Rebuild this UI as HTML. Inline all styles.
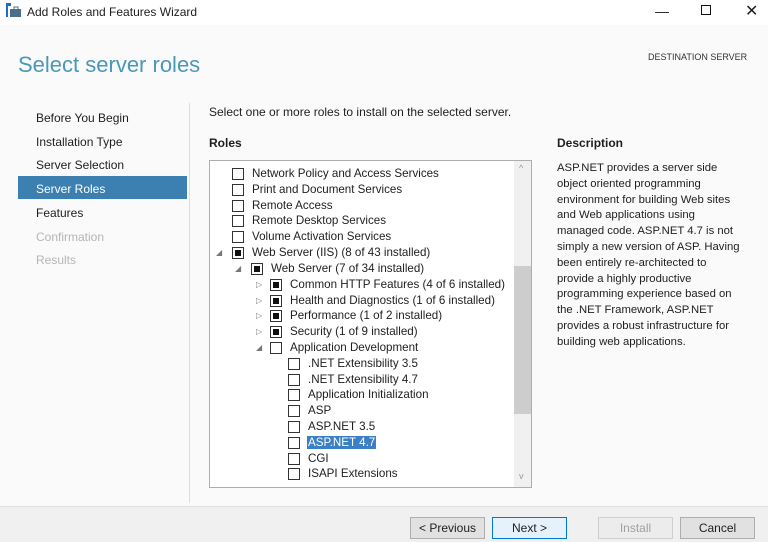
<!DOCTYPE html>
<html><head><style>
*{margin:0;padding:0;box-sizing:border-box}
body{width:768px;height:542px;position:relative;background:#fafafa;font-family:"Liberation Sans",sans-serif;font-size:12px;color:#1e1e1e;overflow:hidden}
.a{position:absolute;white-space:nowrap}
.tb{position:absolute;left:0;top:0;width:768px;height:25px;background:#fff}
.nav{position:absolute;left:36px;font-size:12px;color:#1e1e1e}
.row{position:absolute;height:16px;line-height:16px;white-space:nowrap;font-size:11.6px}
.cb{position:absolute;width:12px;height:12px;border:1px solid #333;background:#fff;top:2px}
.cb.f::after{content:"";position:absolute;left:2px;top:2px;width:6px;height:6px;background:#111}
.ar{position:absolute;top:0;font-size:8px;color:#777}
.btn{position:absolute;top:517px;height:22px;border:1px solid #adadad;background:#e1e1e1;text-align:center;line-height:20px;font-size:12px}
</style></head><body>
<div class="tb"></div>
<svg class="a" style="left:6px;top:3px" width="16" height="16"><rect x="0" y="0" width="5" height="3" fill="#1a6fc9"/><rect x="0" y="0" width="2" height="14" fill="#1a6fc9"/><rect x="4" y="6" width="11" height="8" fill="#4a6d8c"/><rect x="8" y="4" width="4" height="3" fill="none" stroke="#4a6d8c"/></svg>
<div class="a" style="left:27px;top:5px;font-size:12px">Add Roles and Features Wizard</div>
<div class="a" style="left:655px;top:3px;font-size:14px">—</div>
<div class="a" style="left:701px;top:5px;width:10px;height:10px;border:1px solid #111"></div>
<div class="a" style="left:745px;top:1px;font-size:16px">✕</div>
<div class="a" style="left:18px;top:52px;font-size:22px;color:#4a98b8;font-weight:300">Select server roles</div>
<div class="a" style="left:648px;top:52px;font-size:9px;color:#333">DESTINATION SERVER</div>
<div class="nav" style="top:111px">Before You Begin</div>
<div class="nav" style="top:135px">Installation Type</div>
<div class="nav" style="top:158px">Server Selection</div>
<div class="a" style="left:18px;top:176px;width:169px;height:23px;background:#3c7fb1"></div>
<div class="nav" style="top:182px;color:#fff">Server Roles</div>
<div class="nav" style="top:206px">Features</div>
<div class="nav" style="top:230px;color:#b5b5b5">Confirmation</div>
<div class="nav" style="top:253px;color:#b5b5b5">Results</div>
<div class="a" style="left:189px;top:103px;width:1px;height:400px;background:#ddd"></div>
<div class="a" style="left:209px;top:105px">Select one or more roles to install on the selected server.</div>
<div class="a" style="left:209px;top:136px;font-weight:bold">Roles</div>
<div class="a" style="left:557px;top:136px;font-weight:bold">Description</div>
<div class="a" style="left:557px;top:161px;line-height:15.8px;font-size:11.3px;white-space:normal;width:186px">ASP.NET provides a server side object oriented programming environment for building Web sites and Web applications using managed code. ASP.NET 4.7 is not simply a new version of ASP. Having been entirely re-architected to provide a highly productive programming experience based on the .NET Framework, ASP.NET provides a robust infrastructure for building web applications.</div>
<div class="a" style="left:209px;top:160px;width:323px;height:328px;border:1px solid #adadad;background:#fff;overflow:hidden">
<div class="a" style="left:304px;top:0;width:17px;height:326px;background:#f0f0f0"></div>
<div class="a" style="left:304px;top:105px;width:17px;height:148px;background:#cdcdcd"></div>
<div class="a" style="left:309px;top:2px;font-size:9px;color:#999">^</div>
<div class="a" style="left:309px;top:310px;font-size:9px;color:#999">v</div>
<div class="row" style="left:22px;top:5px"><span class="cb" style="left:0"></span><span style="margin-left:20px">Network Policy and Access Services</span></div>
<div class="row" style="left:22px;top:21px"><span class="cb" style="left:0"></span><span style="margin-left:20px">Print and Document Services</span></div>
<div class="row" style="left:22px;top:37px"><span class="cb" style="left:0"></span><span style="margin-left:20px">Remote Access</span></div>
<div class="row" style="left:22px;top:52px"><span class="cb" style="left:0"></span><span style="margin-left:20px">Remote Desktop Services</span></div>
<div class="row" style="left:22px;top:68px"><span class="cb" style="left:0"></span><span style="margin-left:20px">Volume Activation Services</span></div>
<div class="row" style="left:6px;top:84px"><span class="ar" style="left:0">◢</span><span class="cb f" style="left:16px"></span><span style="margin-left:36px">Web Server (IIS) (8 of 43 installed)</span></div>
<div class="row" style="left:25px;top:100px"><span class="ar" style="left:0">◢</span><span class="cb f" style="left:16px"></span><span style="margin-left:36px">Web Server (7 of 34 installed)</span></div>
<div class="row" style="left:46px;top:116px"><span class="ar" style="left:0">▷</span><span class="cb f" style="left:14px"></span><span style="margin-left:34px">Common HTTP Features (4 of 6 installed)</span></div>
<div class="row" style="left:46px;top:132px"><span class="ar" style="left:0">▷</span><span class="cb f" style="left:14px"></span><span style="margin-left:34px">Health and Diagnostics (1 of 6 installed)</span></div>
<div class="row" style="left:46px;top:147px"><span class="ar" style="left:0">▷</span><span class="cb f" style="left:14px"></span><span style="margin-left:34px">Performance (1 of 2 installed)</span></div>
<div class="row" style="left:46px;top:163px"><span class="ar" style="left:0">▷</span><span class="cb f" style="left:14px"></span><span style="margin-left:34px">Security (1 of 9 installed)</span></div>
<div class="row" style="left:46px;top:179px"><span class="ar" style="left:0">◢</span><span class="cb" style="left:14px"></span><span style="margin-left:34px">Application Development</span></div>
<div class="row" style="left:78px;top:195px"><span class="cb" style="left:0"></span><span style="margin-left:20px">.NET Extensibility 3.5</span></div>
<div class="row" style="left:78px;top:211px"><span class="cb" style="left:0"></span><span style="margin-left:20px">.NET Extensibility 4.7</span></div>
<div class="row" style="left:78px;top:226px"><span class="cb" style="left:0"></span><span style="margin-left:20px">Application Initialization</span></div>
<div class="row" style="left:78px;top:242px"><span class="cb" style="left:0"></span><span style="margin-left:20px">ASP</span></div>
<div class="row" style="left:78px;top:258px"><span class="cb" style="left:0"></span><span style="margin-left:20px">ASP.NET 3.5</span></div>
<div class="row" style="left:78px;top:274px"><span class="cb" style="left:0"></span><span style="margin-left:19px;background:#3b7fc4;color:#fff;padding:0 1px">ASP.NET 4.7</span></div>
<div class="row" style="left:78px;top:290px"><span class="cb" style="left:0"></span><span style="margin-left:20px">CGI</span></div>
<div class="row" style="left:78px;top:305px"><span class="cb" style="left:0"></span><span style="margin-left:20px">ISAPI Extensions</span></div>
</div>
<div class="a" style="left:0;top:506px;width:768px;height:36px;background:#f0f0f0;border-top:1px solid #dfdfdf"></div>
<div class="btn" style="left:410px;width:75px">&lt; Previous</div>
<div class="btn" style="left:492px;width:75px;border-color:#0078d7;background:#e5f1fb">Next &gt;</div>
<div class="btn" style="left:598px;width:75px;color:#a0a0a0;border-color:#cfcfcf;background:#ececec">Install</div>
<div class="btn" style="left:680px;width:75px">Cancel</div>
</body></html>
